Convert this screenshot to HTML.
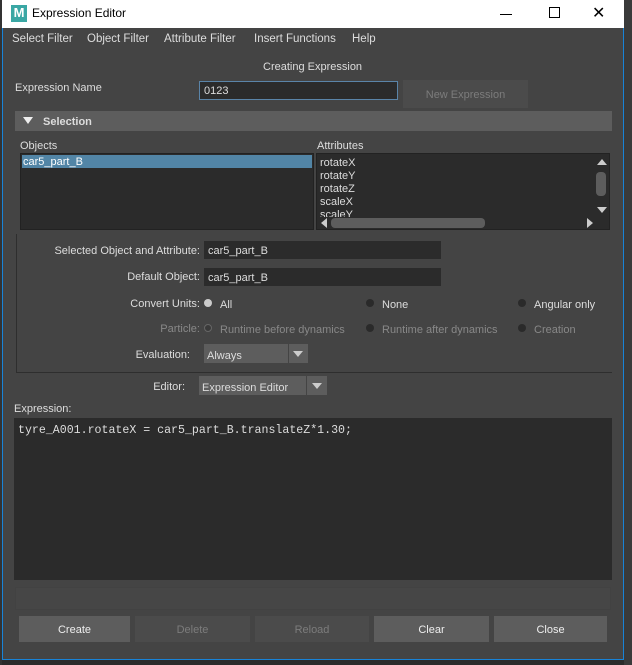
<!DOCTYPE html>
<html><head><style>
*{margin:0;padding:0;box-sizing:border-box}
body{width:632px;height:665px;background:#2b2b2b;position:relative;overflow:hidden;font-family:"Liberation Sans",sans-serif;font-size:11px;color:#ddd}
div,span{position:absolute}
.t{white-space:nowrap}
.fld{background:#2b2b2b;color:#ddd;padding:4px 0 0 4px}
.rad{width:8px;height:8px;border-radius:50%;background:#2a2a2a}
.btn{top:616px;height:26px;background:#5d5d5d;color:#eee;text-align:center;line-height:29px;font-size:11px}
.dis{background:#4b4b4b;color:#7c7c7c}
.gray{color:#888}
</style></head><body>
<div style="left:0;top:0;width:2px;height:665px;background:#333"></div>
<div style="left:624px;top:0;width:8px;height:665px;background:#3a3a3a"></div>
<div style="left:2px;top:0;width:622px;height:660px;background:#444;border:1px solid #1883d7;border-top:none"></div>
<div style="left:2px;top:0;width:622px;height:28px;background:#fff"></div>
<div style="left:11px;top:5px;width:16px;height:17px;background:#3aa7a4;color:#fff;font-weight:bold;font-size:13px;line-height:15px;text-align:center">M</div>
<div class="t" style="left:32px;top:6px;font-size:12px;color:#000">Expression Editor</div>
<div style="left:500px;top:14px;width:12px;height:1px;background:#000"></div>
<div style="left:549px;top:7px;width:11px;height:11px;border:1px solid #000"></div>
<div class="t" style="left:592px;top:3px;font-size:16px;color:#000;font-weight:300">✕</div>

<div class="t" style="left:12px;top:33px;font-size:11.5px">Select Filter</div>
<div class="t" style="left:87px;top:33px;font-size:11.5px">Object Filter</div>
<div class="t" style="left:164px;top:33px;font-size:11.5px">Attribute Filter</div>
<div class="t" style="left:254px;top:33px;font-size:11.5px">Insert Functions</div>
<div class="t" style="left:352px;top:33px;font-size:11.5px">Help</div>

<div class="t" style="left:263px;top:61px">Creating Expression</div>
<div class="t" style="left:15px;top:82px">Expression Name</div>
<div class="fld" style="left:199px;top:81px;width:199px;height:19px;border:1px solid #5a84a8;background:#2b2b2b;padding:3px 0 0 4px">0123</div>
<div style="left:403px;top:80px;width:125px;height:28px;background:#4b4b4b;color:#7c7c7c;text-align:center;line-height:31px">New Expression</div>

<div style="left:15px;top:111px;width:597px;height:20px;background:#5d5d5d"></div>
<div style="left:23px;top:117px;width:0;height:0;border-left:5px solid transparent;border-right:5px solid transparent;border-top:7px solid #eee"></div>
<div class="t" style="left:43px;top:116px;font-weight:bold;color:#ddd">Selection</div>

<div class="t" style="left:20px;top:140px">Objects</div>
<div class="t" style="left:317px;top:140px">Attributes</div>
<div style="left:20px;top:153px;width:294px;height:77px;background:#2b2b2b;border:1px solid #222"></div>
<div style="left:22px;top:155px;width:290px;height:13px;background:#5285a6"></div>
<div class="t" style="left:23px;top:156px;color:#fff">car5_part_B</div>
<div style="left:316px;top:153px;width:294px;height:77px;background:#2b2b2b;border:1px solid #222;overflow:hidden">
<div class="t" style="left:3px;top:3px;line-height:13px">rotateX<br>rotateY<br>rotateZ<br>scaleX<br>scaleY</div>
<div style="left:0;top:63px;width:292px;height:13px;background:#2b2b2b"></div>
<div style="left:279px;top:0;width:13px;height:76px;background:#2b2b2b"></div>
</div>
<div style="left:597px;top:159px;width:0;height:0;border-left:5px solid transparent;border-right:5px solid transparent;border-bottom:6px solid #ccc"></div>
<div style="left:597px;top:207px;width:0;height:0;border-left:5px solid transparent;border-right:5px solid transparent;border-top:6px solid #ccc"></div>
<div style="left:596px;top:172px;width:10px;height:24px;border-radius:4px;background:#5d5d5d"></div>
<div style="left:321px;top:218px;width:0;height:0;border-top:5px solid transparent;border-bottom:5px solid transparent;border-right:6px solid #ccc"></div>
<div style="left:587px;top:218px;width:0;height:0;border-top:5px solid transparent;border-bottom:5px solid transparent;border-left:6px solid #ccc"></div>
<div style="left:331px;top:218px;width:154px;height:10px;border-radius:4px;background:#5d5d5d"></div>

<div style="left:16px;top:234px;width:1px;height:138px;background:#2e2e2e"></div>
<div style="left:16px;top:372px;width:596px;height:1px;background:#2e2e2e"></div>

<div class="t" style="left:0;top:245px;width:200px;text-align:right">Selected Object and Attribute:</div>
<div class="fld" style="left:204px;top:241px;width:237px;height:18px">car5_part_B</div>
<div class="t" style="left:0;top:271px;width:200px;text-align:right">Default Object:</div>
<div class="fld" style="left:204px;top:268px;width:237px;height:18px">car5_part_B</div>

<div class="t" style="left:0;top:298px;width:200px;text-align:right">Convert Units:</div>
<div class="rad" style="left:204px;top:299px;background:#ccc"></div>
<div class="t" style="left:220px;top:299px">All</div>
<div class="rad" style="left:366px;top:299px"></div>
<div class="t" style="left:382px;top:299px">None</div>
<div class="rad" style="left:518px;top:299px"></div>
<div class="t" style="left:534px;top:299px">Angular only</div>

<div class="t gray" style="left:0;top:323px;width:200px;text-align:right">Particle:</div>
<div class="rad" style="left:204px;top:324px;background:#3a3a3a;border:1px solid #666"></div>
<div class="t gray" style="left:220px;top:324px">Runtime before dynamics</div>
<div class="rad" style="left:366px;top:324px"></div>
<div class="t gray" style="left:382px;top:324px">Runtime after dynamics</div>
<div class="rad" style="left:518px;top:324px"></div>
<div class="t gray" style="left:534px;top:324px">Creation</div>

<div class="t" style="left:0;top:349px;width:190px;text-align:right">Evaluation:</div>
<div style="left:204px;top:344px;width:104px;height:19px;background:#5d5d5d"></div>
<div class="t" style="left:207px;top:350px">Always</div>
<div style="left:288px;top:344px;width:1px;height:19px;background:#444"></div>
<div style="left:293px;top:351px;width:0;height:0;border-left:5px solid transparent;border-right:5px solid transparent;border-top:6px solid #ccc"></div>

<div class="t" style="left:0;top:381px;width:185px;text-align:right">Editor:</div>
<div style="left:199px;top:376px;width:128px;height:19px;background:#5d5d5d"></div>
<div class="t" style="left:202px;top:382px">Expression Editor</div>
<div style="left:306px;top:376px;width:1px;height:19px;background:#444"></div>
<div style="left:312px;top:383px;width:0;height:0;border-left:5px solid transparent;border-right:5px solid transparent;border-top:6px solid #ccc"></div>

<div class="t" style="left:14px;top:403px">Expression:</div>
<div style="left:14px;top:418px;width:598px;height:162px;background:#2b2b2b"></div>
<div class="t" style="left:18px;top:424px;font-family:'Liberation Mono',monospace;font-size:11.6px;color:#ddd">tyre_A001.rotateX = car5_part_B.translateZ*1.30;</div>
<div style="left:15px;top:587px;width:596px;height:23px;background:#464646;border:1px solid #424242"></div>

<div class="btn" style="left:19px;width:111px">Create</div>
<div class="btn dis" style="left:135px;width:115px">Delete</div>
<div class="btn dis" style="left:255px;width:114px">Reload</div>
<div class="btn" style="left:374px;width:115px">Clear</div>
<div class="btn" style="left:494px;width:113px">Close</div>
</body></html>
